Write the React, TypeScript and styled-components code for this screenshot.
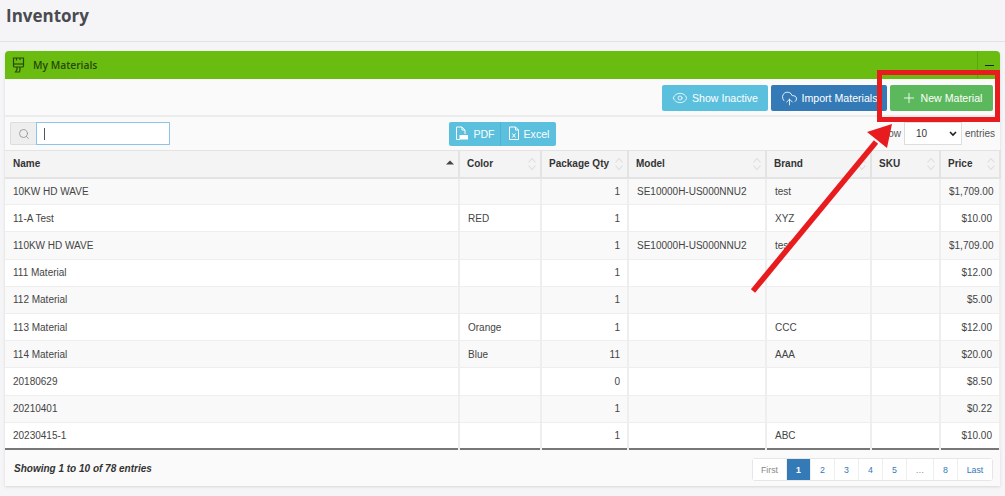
import React from 'react'
import styled, {createGlobalStyle} from 'styled-components'
import {CloudUpload, Eye, Plus, Search} from 'lucide-react'

const GlobalStyle = createGlobalStyle`
  html, body {
    margin: 0;
    padding: 0;
    background: #f5f5f7;
    font-family: "Liberation Sans", Arial, sans-serif;
    font-size: 10px;
    color: #444;
  }
`

const Page = styled.div`
  position: relative;
  width: 1005px;
  height: 496px;
  overflow: hidden;
`

const PageHeader = styled.div`
  height: 41px;
  border-bottom: 1px solid #e2e2e2;
  padding-left: 6px;
`

const Title = styled.h1`
  margin: 0;
  font-family: "Open Sans", sans-serif;
  font-size: 17px;
  line-height: 32px;
  font-weight: 700;
  color: #4a4a50;
`

const Panel = styled.section`
  margin: 9px 5px 0;
  height: 435px;
  background: #fafafa;
  border-radius: 4px 4px 0 0;
  box-shadow: 0 1px 3px rgba(0, 0, 0, 0.12);
`

const PanelHead = styled.header`
  height: 28px;
  background: #6abc10;
  border-radius: 4px 4px 0 0;
  display: flex;
  align-items: center;
  padding-left: 7px;
  gap: 8px;
  color: #274a0b;
`

const PanelTitle = styled.span`
  flex: 1;
  font-family: "Open Sans", sans-serif;
  font-size: 10.3px;
  font-weight: 600;
`

const Collapse = styled.div`
  width: 22px;
  height: 28px;
  border-left: 1px solid #5ca70c;
  display: flex;
  align-items: center;
  justify-content: center;
`

const CollapseBar = styled.div`
  width: 9px;
  height: 1px;
  background: #222;
`

const Toolbar = styled.div`
  height: 38px;
  box-sizing: border-box;
  border-bottom: 2px solid #ececec;
  display: flex;
  justify-content: flex-end;
  align-items: center;
  gap: 3px;
  padding: 2px 7px 0 0;
`

const Button = styled.button<{$bg: string; $w: number}>`
  width: ${p => p.$w}px;
  height: 26px;
  border: 0;
  border-radius: 2px;
  background: ${p => p.$bg};
  color: #fff;
  font-family: "Liberation Sans", Arial, sans-serif;
  font-size: 10.6px;
  display: flex;
  align-items: center;
  justify-content: center;
  gap: 4px;
  padding: 0;
  white-space: nowrap;
`

const FilterRow = styled.div`
  height: 33px;
  display: grid;
  grid-template-columns: 1fr auto 1fr;
  align-items: center;
  padding: 0 5px;
  box-sizing: border-box;
`

const SearchGroup = styled.div`
  display: flex;
  height: 23px;
`

const SearchAddon = styled.div`
  width: 26px;
  background: #eee;
  border: 1px solid #ddd;
  border-right: 0;
  border-radius: 2px 0 0 2px;
  display: flex;
  align-items: center;
  justify-content: center;
  color: #888;
  box-sizing: border-box;
`

const SearchInput = styled.div`
  width: 134px;
  box-sizing: border-box;
  border: 1px solid #8fc4ea;
  background: #fff;
  display: flex;
  align-items: center;
  padding-left: 7px;
`

const Caret = styled.div`
  width: 1px;
  height: 12px;
  background: #555;
`

const ExportGroup = styled.div`
  display: flex;
  height: 24px;
  width: 107px;
  background: #5bc0de;
  border-radius: 2px;
  color: #fff;
  font-size: 10.6px;
`

const ExportButton = styled.div<{$w: number}>`
  width: ${p => p.$w}px;
  box-sizing: border-box;
  display: flex;
  align-items: center;
  justify-content: center;
  gap: 4px;
  & + & {
    border-left: 1px solid #4fb2d0;
  }
`

const Length = styled.div`
  justify-self: end;
  display: flex;
  align-items: center;
  gap: 3px;
  color: #555;
`

const Select = styled.div`
  width: 58px;
  height: 23px;
  box-sizing: border-box;
  background: #fff;
  border: 1px solid #ddd;
  display: flex;
  align-items: center;
  justify-content: space-between;
  padding: 0 4px 0 11px;
  color: #333;
`

const Table = styled.table`
  width: 995px;
  table-layout: fixed;
  border-collapse: collapse;
  border-bottom: 2px solid #777;
`

const Th = styled.th<{$w: number}>`
  width: ${p => p.$w}px;
  height: 27px;
  padding: 0 7px;
  box-sizing: border-box;
  background: #f4f4f4;
  border: 1px solid #e3e3e3;
  border-width: 1px 2px 2px 0;
  text-align: left;
  font-size: 10px;
  font-weight: 700;
  color: #333;
  position: relative;

  &:first-child {
    padding-left: 8px;
  }
`

const SortMark = styled.span`
  position: absolute;
  right: 2px;
  top: 6px;
  color: #ddd;
  display: flex;
`

const Row = styled.tr<{$odd: boolean}>`
  background: ${p => (p.$odd ? '#f9f9f9' : '#fff')};
`

const Td = styled.td<{$right?: boolean}>`
  height: 27.2px;
  box-sizing: border-box;
  padding: 0 7px 0 8px;
  border-right: 2px solid #eee;
  border-bottom: 1px solid #eee;
  text-align: ${p => (p.$right ? 'right' : 'left')};
  font-size: 10px;
  color: #444;
  white-space: nowrap;
`

const Footer = styled.div`
  display: flex;
  align-items: center;
  justify-content: space-between;
  padding: 8px 7px 0 9px;
`

const Info = styled.div`
  font-weight: 700;
  font-style: italic;
  font-size: 10px;
  color: #333;
  margin-top: -3px;
`

const Pager = styled.nav`
  display: flex;
  height: 23px;
  box-sizing: border-box;
  background: #fff;
  border: 1px solid #e6e6e6;
  border-radius: 3px;
`

const PageLink = styled.a<{$active?: boolean; $muted?: boolean; $w: number}>`
  width: ${p => p.$w}px;
  box-sizing: border-box;
  display: flex;
  align-items: center;
  justify-content: center;
  font-size: 8.8px;
  background: ${p => (p.$active ? '#337ab7' : '#fff')};
  color: ${p => (p.$active ? '#fff' : p.$muted ? '#888' : '#337ab7')};
  font-weight: ${p => (p.$active ? 700 : 400)};
  border-right: 1px solid #eee;
  &:last-child {
    border-right: 0;
  }
`

const Highlight = styled.div`
  position: absolute;
  left: 877px;
  top: 70px;
  width: 123px;
  height: 52px;
  box-sizing: border-box;
  border: 5px solid #e81c1f;
`

const ArrowOverlay = styled.svg`
  position: absolute;
  left: 740px;
  top: 115px;
`

const BrushIcon = () => (
  <svg width="13" height="16" viewBox="0 0 13 16" fill="none" stroke="currentColor" strokeWidth="1.2">
    <path d="M1.5 1H11.5V9A1 1 0 0 1 10.5 10H2.5A1 1 0 0 1 1.5 9Z" />
    <path d="M1.5 7H11.5" />
    <path d="M4.5 1V3.5M8 1V3" />
    <path d="M5 10V12.5L3.5 15H7.5L8 12.5V10" />
  </svg>
)

const SortIcon = () => (
  <svg width="12" height="14" viewBox="0 0 12 14" fill="none" stroke="currentColor" strokeWidth="1.1">
    <path d="M2.5 5.5 6 1.5 9.5 5.5" />
    <path d="M2.5 8.5 6 12.5 9.5 8.5" />
  </svg>
)

const PdfIcon = () => (
  <svg width="15" height="15" viewBox="0 0 15 15" fill="none" stroke="#fff" strokeWidth="1">
    <path d="M6 13.5H2.5V1H8L11 4V8" />
    <path d="M8 1V4H11" />
    <rect x="5.5" y="9" width="8.5" height="4.5" fill="#fff" stroke="none" />
  </svg>
)

const ExcelIcon = () => (
  <svg width="12" height="15" viewBox="0 0 12 15" fill="none" stroke="#fff" strokeWidth="1">
    <path d="M1.5 1H7.5L10.5 4V13.5H1.5Z" />
    <path d="M7.5 1V4H10.5" />
    <path d="M4.3 7.5 7.5 11.5M7.5 7.5 4.3 11.5" />
  </svg>
)

const columns: [string, number][] = [
  ['Name', 454],
  ['Color', 82],
  ['Package Qty', 87],
  ['Model', 138],
  ['Brand', 105],
  ['SKU', 69],
  ['Price', 60],
]

const rows = [
  ['10KW HD WAVE', '', '1', 'SE10000H-US000NNU2', 'test', '', '$1,709.00'],
  ['11-A Test', 'RED', '1', '', 'XYZ', '', '$10.00'],
  ['110KW HD WAVE', '', '1', 'SE10000H-US000NNU2', 'test', '', '$1,709.00'],
  ['111 Material', '', '1', '', '', '', '$12.00'],
  ['112 Material', '', '1', '', '', '', '$5.00'],
  ['113 Material', 'Orange', '1', '', 'CCC', '', '$12.00'],
  ['114 Material', 'Blue', '11', '', 'AAA', '', '$20.00'],
  ['20180629', '', '0', '', '', '', '$8.50'],
  ['20210401', '', '1', '', '', '', '$0.22'],
  ['20230415-1', '', '1', '', 'ABC', '', '$10.00'],
]

const pages: [string, number][] = [['2', 24], ['3', 24], ['4', 24], ['5', 24], ['…', 27], ['8', 24], ['Last', 34]]

const App = () => (
  <Page>
    <GlobalStyle />
    <PageHeader>
      <Title>Inventory</Title>
    </PageHeader>
    <Panel>
      <PanelHead>
        <BrushIcon />
        <PanelTitle>My Materials</PanelTitle>
        <Collapse>
          <CollapseBar />
        </Collapse>
      </PanelHead>
      <Toolbar>
        <Button $bg="#5bc0de" $w={106}>
          <Eye size={16} strokeWidth={1.2} /> Show Inactive
        </Button>
        <Button $bg="#337ab7" $w={116}>
          <CloudUpload size={17} strokeWidth={1.2} /> Import Materials
        </Button>
        <Button $bg="#5cb85c" $w={103}>
          <Plus size={16} strokeWidth={1.3} /> New Material
        </Button>
      </Toolbar>
      <FilterRow>
        <SearchGroup>
          <SearchAddon>
            <Search size={12} strokeWidth={1.5} />
          </SearchAddon>
          <SearchInput>
            <Caret />
          </SearchInput>
        </SearchGroup>
        <ExportGroup>
          <ExportButton $w={51}>
            <PdfIcon /> PDF
          </ExportButton>
          <ExportButton $w={56}>
            <ExcelIcon /> Excel
          </ExportButton>
        </ExportGroup>
        <Length>
          Show
          <Select>
            10
            <svg width="8" height="6" viewBox="0 0 8 6" fill="none" stroke="#222" strokeWidth="1.6">
              <path d="M1 1 4 4 7 1" />
            </svg>
          </Select>
          entries
        </Length>
      </FilterRow>
      <Table>
        <thead>
          <tr>
            {columns.map(([name, w], i) => (
              <Th key={name} $w={w}>
                {name}
                <SortMark>
                  {i === 0 ? (
                    <svg width="12" height="14" viewBox="0 0 12 14">
                      <path d="M2 7.5 6 3.5 10 7.5Z" fill="#444" />
                    </svg>
                  ) : (
                    <SortIcon />
                  )}
                </SortMark>
              </Th>
            ))}
          </tr>
        </thead>
        <tbody>
          {rows.map((row, r) => (
            <Row key={row[0]} $odd={r % 2 === 0}>
              {row.map((cell, c) => (
                <Td key={c} $right={c === 2 || c === 6}>
                  {cell}
                </Td>
              ))}
            </Row>
          ))}
        </tbody>
      </Table>
      <Footer>
        <Info>Showing 1 to 10 of 78 entries</Info>
        <Pager>
          <PageLink $muted $w={34}>First</PageLink>
          <PageLink $active $w={24}>1</PageLink>
          {pages.map(([label, w]) => (
            <PageLink key={label} $w={w} $muted={label === '…'}>
              {label}
            </PageLink>
          ))}
        </Pager>
      </Footer>
    </Panel>
    <Highlight />
    <ArrowOverlay width="170" height="185" viewBox="740 115 170 185">
      <path d="M753 291 876 142" stroke="#e81c1f" strokeWidth="5.5" fill="none" />
      <polygon points="892,124 867,132 887,148" fill="#e81c1f" />
    </ArrowOverlay>
  </Page>
)

export default App
